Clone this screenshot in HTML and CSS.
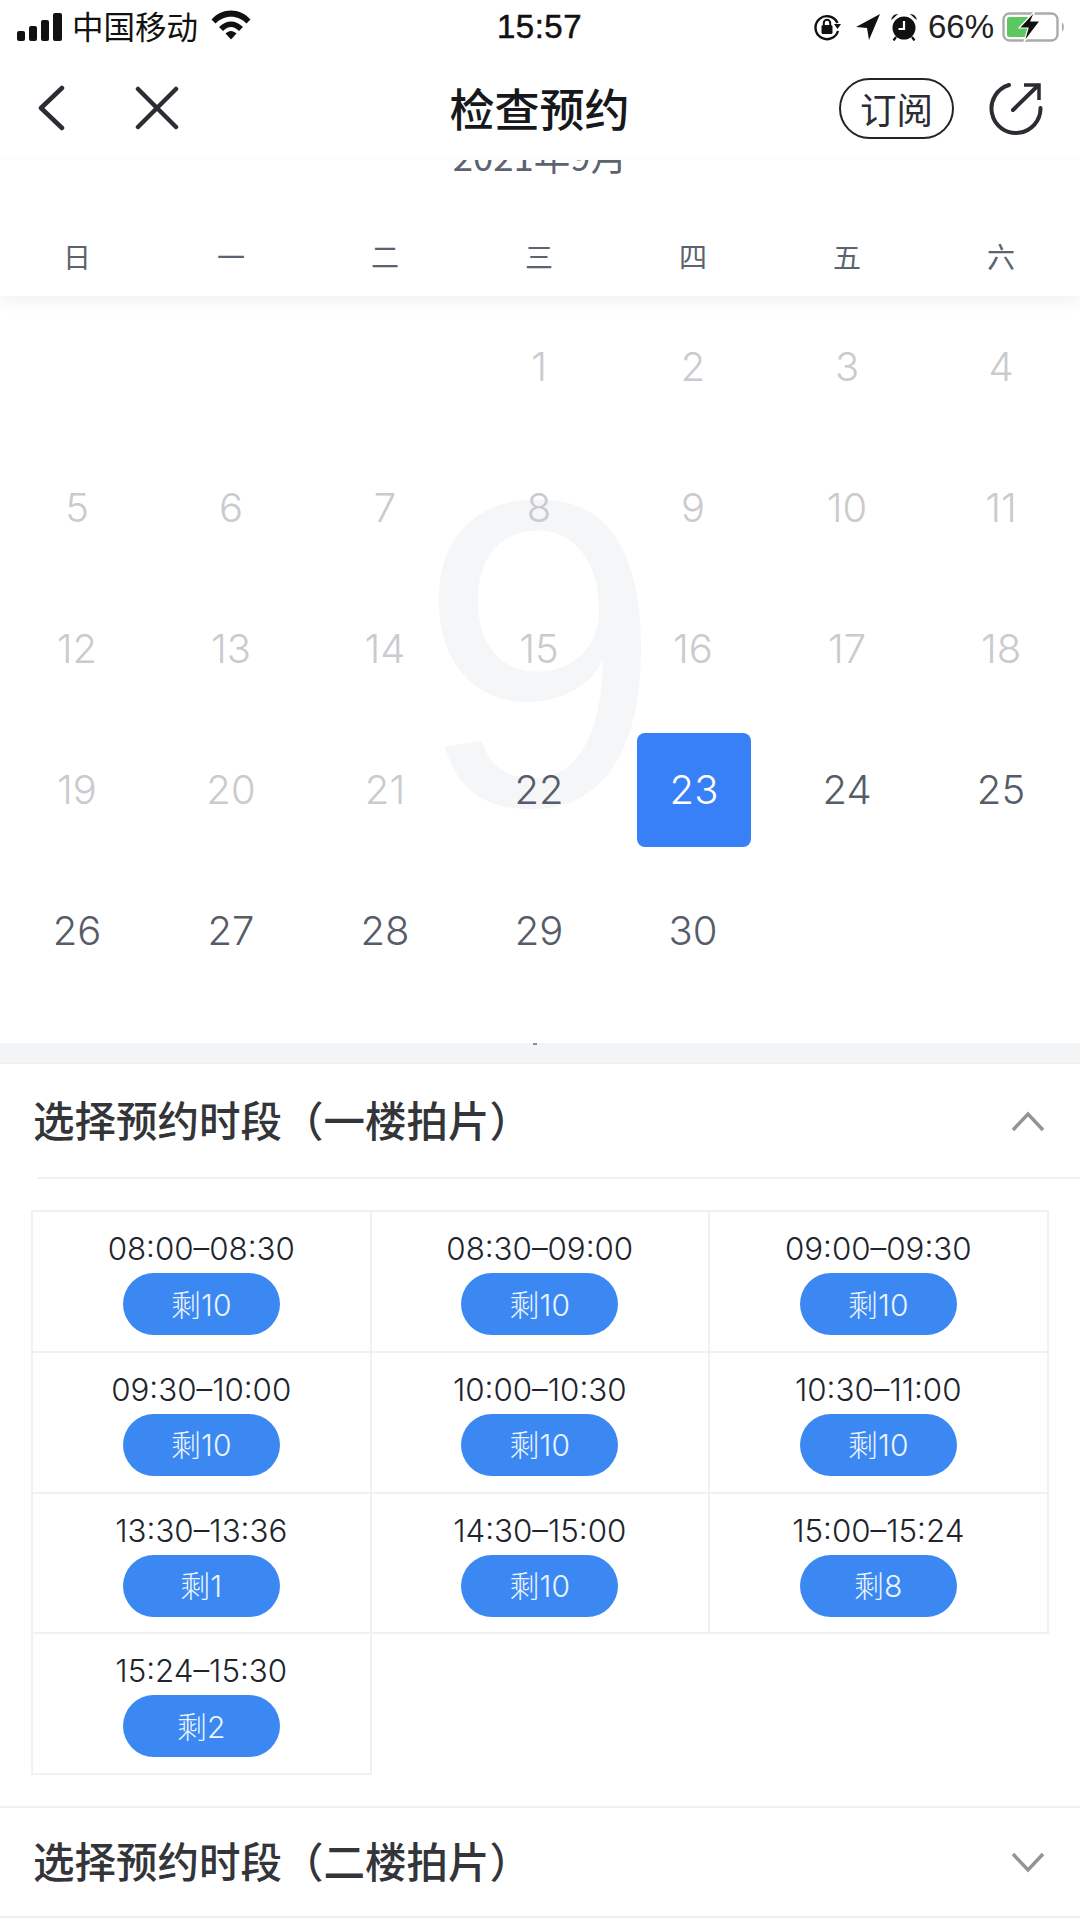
FILE: index.html
```html
<!DOCTYPE html>
<html lang="zh-CN">
<head>
<meta charset="utf-8">
<title>检查预约</title>
<link rel="stylesheet" href="styles.css">
</head>
<body>
<div class="page">
  <div class="status">
    <div class="status-left">
      <svg class="ic-signal" viewBox="0 0 45 28" width="45" height="28"><rect x="0" y="18" width="8" height="10" rx="2"/><rect x="12" y="13" width="8" height="15" rx="2"/><rect x="24" y="7" width="8" height="21" rx="2"/><rect x="36" y="0" width="9" height="28" rx="2"/></svg>
      <span class="carrier">中国移动</span>
      <svg class="ic-wifi" viewBox="0 0 40 30" width="40" height="30"><path d="M0.5 9.5C11 -2.5 29 -2.5 39.5 9.5L35.5 13.5C27 4.5 13 4.5 4.5 13.5Z"/><path d="M8 17C15 9.5 25 9.5 32 17L28 21C22.5 15.5 17.5 15.5 12 21Z"/><path d="M14.5 23.5C18 20 22 20 25.5 23.5L20 29.5Z"/></svg>
    </div>
    <span class="clock">15:57</span>
    <div class="status-right">
      <svg class="ic-lock" viewBox="0 0 28 28" width="28" height="28"><path d="M24.5 10A11.5 11.5 0 1 0 25 18" fill="none" stroke="#111" stroke-width="2.400"/><path d="M21 11h7l-3.500 5z" fill="#111"/><rect x="8.500" y="12" width="11" height="9" rx="1.500" fill="#111"/><path d="M10.800 12V10a3.200 3.200 0 0 1 6.400 0v2" fill="none" stroke="#111" stroke-width="2"/></svg>
      <svg class="ic-arrow" viewBox="0 0 24 26" width="24" height="26"><path d="M0 13L24 0L13 26L11 14Z" fill="#111"/></svg>
      <svg class="ic-alarm" viewBox="0 0 26 28" width="26" height="28"><circle cx="13" cy="15" r="11.500" fill="#111"/><path d="M0.500 7A6 6 0 0 1 7 1Z M25.500 7A6 6 0 0 0 19 1Z" fill="#111"/><path d="M5 24l-2.500 3.500M21 24l2.500 3.500" stroke="#111" stroke-width="2.200"/><path d="M13 8v8H7.500" fill="none" stroke="#fff" stroke-width="2.200"/></svg>
      <span class="percent">66%</span>
      <svg class="ic-battery" viewBox="0 0 64 32" width="64" height="32"><rect x="1.500" y="2.500" width="54" height="27" rx="6" fill="none" stroke="#ababab" stroke-width="2.400"/><rect x="5" y="6" width="22" height="20" rx="2.500" fill="#5cc75e"/><path d="M60 11.500c2.500 1 2.500 8 0 9z" fill="#ababab"/><path d="M33 0L17 17h9l-4 14L38 10h-9z" fill="#111" stroke="#fff" stroke-width="1.200"/></svg>
    </div>
  </div>

  <header class="nav">
    <div class="nav-left">
      <svg viewBox="0 0 28 46" width="28" height="46"><path d="M25 3L4 23l21 20" fill="none" stroke="#2b2d33" stroke-width="4.500" stroke-linecap="round" stroke-linejoin="round"/></svg>
      <svg viewBox="0 0 44 44" width="44" height="44"><path d="M3 3l38 38M41 3L3 41" fill="none" stroke="#2b2d33" stroke-width="4.500" stroke-linecap="round"/></svg>
    </div>
    <h1 class="title">检查预约</h1>
    <div class="nav-right">
      <span class="subscribe">订阅</span>
      <svg viewBox="0 0 54 56" width="54" height="56"><path d="M20 5A24.500 24.500 0 1 0 51.500 28" fill="none" stroke="#2b2d33" stroke-width="4" stroke-linecap="round"/><path d="M24 30L49 5.500" fill="none" stroke="#2b2d33" stroke-width="4" stroke-linecap="round"/><path d="M35 5H50V20" fill="none" stroke="#2b2d33" stroke-width="3.500"/></svg>
    </div>
  </header>

  <section class="cal-head">
    <div class="year-clip"><span class="year">2021年9月</span></div>
    <div class="weekdays">
      <span>日</span><span>一</span><span>二</span><span>三</span><span>四</span><span>五</span><span>六</span>
    </div>
  </section>

  <section class="calendar">
    <div class="watermark">9</div>
    <div class="days">
      <span></span><span></span><span></span>
      <span class="off">1</span><span class="off">2</span><span class="off">3</span><span class="off">4</span>
      <span class="off">5</span><span class="off">6</span><span class="off">7</span><span class="off">8</span><span class="off">9</span><span class="off">10</span><span class="off">11</span>
      <span class="off">12</span><span class="off">13</span><span class="off">14</span><span class="off">15</span><span class="off">16</span><span class="off">17</span><span class="off">18</span>
      <span class="off">19</span><span class="off">20</span><span class="off">21</span><span class="on">22</span><span class="on selected"><b>23</b></span><span class="on">24</span><span class="on">25</span>
      <span class="on">26</span><span class="on">27</span><span class="on">28</span><span class="on">29</span><span class="on">30</span>
    </div>
  </section>

  <div class="band"></div>

  <section class="panel">
    <div class="panel-head">
      <h2>选择预约时段（一楼拍片）</h2>
      <svg class="chev-up" viewBox="0 0 34 22" width="34" height="22"><path d="M2 20L17 4l15 16" fill="none" stroke="#949494" stroke-width="3.500"/></svg>
    </div>
    <div class="slots">
      <div class="slot"><span class="time">08:00–08:30</span><span class="pill">剩10</span></div>
      <div class="slot"><span class="time">08:30–09:00</span><span class="pill">剩10</span></div>
      <div class="slot"><span class="time">09:00–09:30</span><span class="pill">剩10</span></div>
      <div class="slot"><span class="time">09:30–10:00</span><span class="pill">剩10</span></div>
      <div class="slot"><span class="time">10:00–10:30</span><span class="pill">剩10</span></div>
      <div class="slot"><span class="time">10:30–11:00</span><span class="pill">剩10</span></div>
      <div class="slot"><span class="time">13:30–13:36</span><span class="pill">剩1</span></div>
      <div class="slot"><span class="time">14:30–15:00</span><span class="pill">剩10</span></div>
      <div class="slot"><span class="time">15:00–15:24</span><span class="pill">剩8</span></div>
      <div class="slot"><span class="time">15:24–15:30</span><span class="pill">剩2</span></div>
    </div>
  </section>

  <section class="panel-two">
    <h2>选择预约时段（二楼拍片）</h2>
    <svg class="chev-down" viewBox="0 0 34 22" width="34" height="22"><path d="M2 3l15 16L32 3" fill="none" stroke="#949494" stroke-width="3.500"/></svg>
  </section>
</div>
</body>
</html>
```
FILE: styles.css
```css
* { box-sizing: border-box; margin: 0; padding: 0; }
html, body { background: #fff; }
body {
  width: 1080px;
  height: 1920px;
  overflow: hidden;
  font-family: "Liberation Sans", "Noto Sans CJK SC", sans-serif;
  color: #2b2d33;
}
.page { width: 1080px; height: 1920px; display: flex; flex-direction: column; }

.status {
  height: 52px;
  flex: none;
  display: grid;
  grid-template-columns: 1fr auto 1fr;
  align-items: center;
  padding: 2px 14px 0 17px;
  color: #111;
}
.status-left { display: flex; align-items: center; }
.ic-signal { fill: #111; }
.carrier { font-size: 31.5px; line-height: 40px; margin: -4px 0 0 10px; font-family: "Noto Sans CJK SC", sans-serif; }
.ic-wifi { fill: #111; margin: -4px 0 0 13px; }
.clock { font-size: 33px; font-weight: 400; letter-spacing: 0.5px; -webkit-text-stroke: 0.5px #111; margin-left: -4px; }
.status-right { display: flex; align-items: center; justify-content: flex-end; }
.ic-arrow { margin-left: 15px; }
.ic-alarm { margin-left: 11px; }
.percent { font-size: 33px; margin-left: 11px; color: #222; }
.ic-battery { margin-left: 8px; }

.nav {
  height: 108px;
  flex: none;
  display: grid;
  grid-template-columns: 1fr auto 1fr;
  align-items: center;
  padding: 4px 37px 0 37px;
}
.nav-left { display: flex; align-items: center; gap: 70px; }
.title { font-family: "Noto Sans CJK SC", sans-serif; font-size: 45px; font-weight: 500; color: #17181b; line-height: 60px; margin-left: -1px; }
.nav-right { display: flex; align-items: center; justify-content: flex-end; gap: 35px; }
.subscribe {
  width: 115px;
  height: 61px;
  border: 2.5px solid #222429;
  border-radius: 31px;
  display: flex;
  align-items: center;
  justify-content: center;
  font-family: "Noto Sans CJK SC", sans-serif;
  font-size: 36.5px;
  color: #2b2d33;
}

.cal-head {
  flex: none;
  position: relative;
  z-index: 2;
  background: #fff;
  box-shadow: 0 6px 14px rgba(60, 70, 90, 0.07);
}
.year-clip { height: 20px; overflow: hidden; display: flex; justify-content: center; align-items: flex-end; }
.year {
  font-family: "Noto Sans CJK SC", sans-serif;
  font-size: 36.5px;
  line-height: 50px;
  flex: none;
  color: #5c6370;
  margin-bottom: -1px;
}
.weekdays {
  display: grid;
  grid-template-columns: repeat(7, 1fr);
  padding: 56px 2px 20px 0;
  font-family: "Noto Sans CJK SC", sans-serif;
  font-size: 28px;
  line-height: 40px;
  text-align: center;
  color: #5c6370;
}

.calendar { flex: none; height: 747px; position: relative; overflow: hidden; }
.watermark {
  position: absolute;
  left: 0;
  right: 0;
  top: 107px;
  text-align: center;
  font-family: "Liberation Sans", sans-serif;
  font-size: 438px;
  line-height: 500px;
  color: #f4f6f8;
}
.days {
  position: relative;
  display: grid;
  grid-template-columns: repeat(7, 1fr);
  grid-auto-rows: 141px;
  padding-right: 2px;
  text-align: center;
  font-family: Inter, sans-serif;
  font-weight: 300;
  font-size: 40px;
}
.days span { display: flex; align-items: center; justify-content: center; }
.off { color: #c9cbce; }
.on { color: #565c68; }
.selected b {
  width: 114px;
  height: 114px;
  margin-left: 2px;
  border-radius: 8px;
  background: #3880f8;
  color: #fff;
  font-weight: 300;
  display: flex;
  align-items: center;
  justify-content: center;
}

.band { flex: none; height: 21px; background: #f2f4f5; border-bottom: 1px solid #eceef0; position: relative; }
.band::before {
  content: "";
  position: absolute;
  left: 533px;
  top: 0;
  width: 4px;
  height: 2px;
  background: #8a8f96;
}

.panel { flex: none; height: 742px; }
.panel-head {
  height: 115px;
  margin-left: 33px;
  padding: 0 35px 6px 0;
  display: flex;
  align-items: center;
  justify-content: space-between;
  position: relative;
}
.panel-head::after {
  content: "";
  position: absolute;
  left: 5px;
  right: 0;
  bottom: 0;
  height: 2px;
  background: #f0f1f2;
}
.chev-up, .chev-down { margin-top: 4px; }
h2 {
  font-family: "Noto Sans CJK SC", sans-serif;
  font-size: 41.5px;
  font-weight: 500;
  color: #333538;
  line-height: 56px;
}
.slots {
  display: grid;
  grid-template-columns: repeat(3, 338.5px);
  grid-auto-rows: 140.8px;
  margin: 31px 0 0 31px;
}
.slot {
  border: 2px solid #f0f1f2;
  margin: 0 -2px -2px 0;
  display: flex;
  flex-direction: column;
  align-items: center;
  padding-top: 17px;
  gap: 4px;
}
.time {
  font-family: Inter, sans-serif;
  font-weight: 300;
  font-size: 31.3px;
  line-height: 40px;
  color: #20242c;
}
.pill {
  width: 157px;
  height: 62px;
  border-radius: 31px;
  background: #3c88f2;
  color: #e9f4ff;
  display: flex;
  align-items: center;
  justify-content: center;
  padding-bottom: 3px;
  font-family: Inter, "Noto Sans CJK SC", sans-serif;
  font-weight: 300;
  font-size: 30px;
}

.panel-two {
  flex: none;
  height: 112px;
  border-top: 2px solid #f0f1f2;
  border-bottom: 2px solid #eceef0;
  padding: 0 35px 4px 33px;
  display: flex;
  align-items: center;
  justify-content: space-between;
}
```
